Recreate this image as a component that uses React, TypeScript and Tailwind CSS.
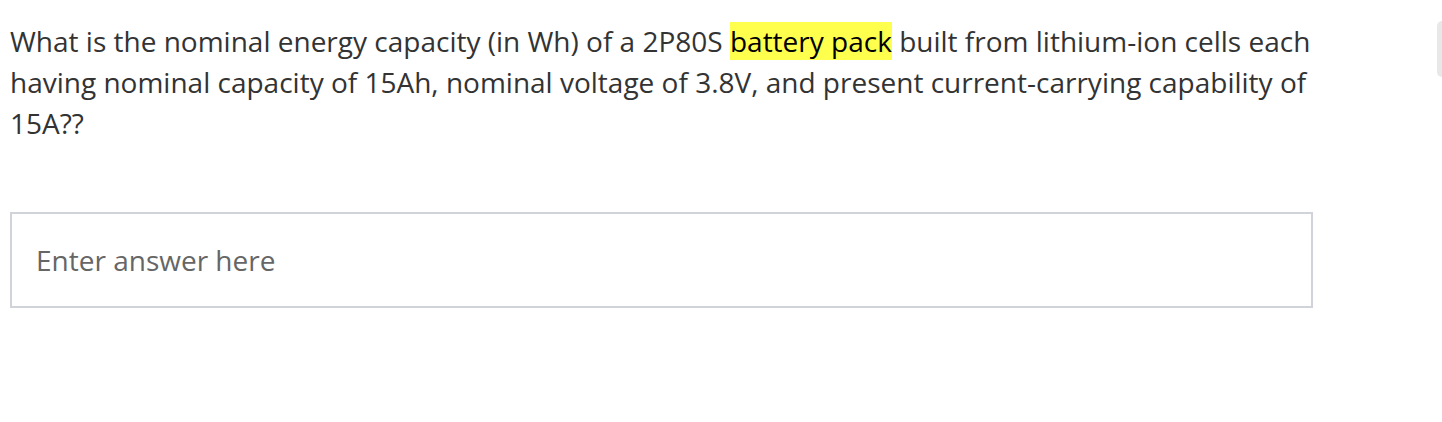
import React from "react";

export default function App() {
  return (
    <div className="relative w-[1442px] h-[422px] bg-white overflow-hidden" style={{ fontFamily: '"Open Sans", sans-serif' }}>
      <div className="w-[1303px] ml-[10px] pt-[21px]">
        <p className="text-[28px] leading-[41px] text-[#333333]">
          What is the nominal energy capacity (in Wh) of a 2P80S{" "}
          <span className="bg-[#ffff4d] text-black">battery pack</span> built from lithium-ion cells each
          having nominal capacity of 15Ah, nominal voltage of 3.8V, and present current-carrying capability of 15A??
        </p>
        <div className="mt-[68px] h-[96px] border-2 border-[#d0d4da] flex items-center px-[24px]">
          <input
            className="w-full outline-none text-[28px] text-[#333333] placeholder:text-[#666666] bg-transparent"
            placeholder="Enter answer here"
            style={{ fontFamily: '"Open Sans", sans-serif' }}
          />
        </div>
      </div>
      <div className="absolute right-0 top-[21px] w-[5px] h-[56px] rounded-l-full bg-[#e8e8e8]" />
    </div>
  );
}
